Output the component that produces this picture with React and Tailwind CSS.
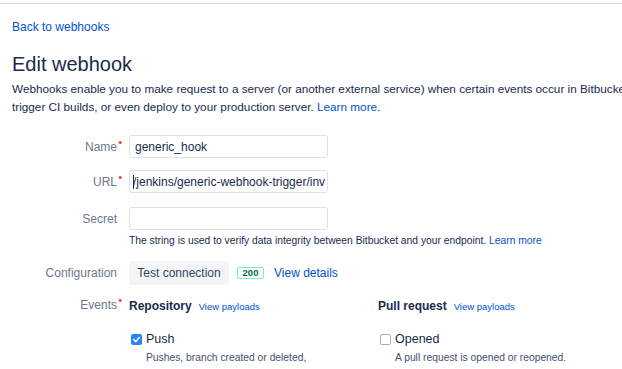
import React from "react";

const font = { fontFamily: '"Liberation Sans", Arial, sans-serif' };

function Req() {
  return <span className="absolute -right-[5px] top-[-2px] text-[10px] leading-none text-[#de350b]">•</span>;
}

function Label({ children, req, className = "" }) {
  return (
    <div className={"w-[105px] shrink-0 text-right text-[12px] text-[#6b778c] " + className}>
      <span className="relative">
        {children}
        {req && <Req />}
      </span>
    </div>
  );
}

function Check({ checked }) {
  return checked ? (
    <span className="flex h-[11px] w-[11px] items-center justify-center rounded-[2px] bg-[#2684ff]">
      <svg width="9" height="9" viewBox="0 0 10 10">
        <path d="M2 5.2 L4.2 7.4 L8 2.8" fill="none" stroke="white" strokeWidth="1.8" strokeLinecap="round" strokeLinejoin="round" />
      </svg>
    </span>
  ) : (
    <span className="block h-[11px] w-[11px] rounded-[2px] border border-[#a5adba] bg-white" />
  );
}

export default function App() {
  return (
    <div className="h-[369px] w-[622px] overflow-hidden bg-white text-[#172b4d]" style={font}>
      <div className="mt-[3px] h-px bg-[#dcdcdc]" />
      <div className="pl-[12px]">
        <div className="mt-[15px] text-[12px] leading-[16px] text-[#0052cc]">Back to webhooks</div>
        <h1 className="mt-[17px] text-[20px] leading-[24px] text-[#172b4d]">Edit webhook</h1>
        <p className="mt-[4px] whitespace-nowrap text-[11.75px] leading-[18px] text-[#172b4d]">
          Webhooks enable you to make request to a server (or another external service) when certain events occur in Bitbucket to
          <br />
          trigger CI builds, or even deploy to your production server. <span className="text-[#0052cc]">Learn more</span>.
        </p>

        <div className="mt-[19px] flex items-center gap-[12px]">
          <Label req>Name</Label>
          <div className="flex h-[23px] w-[199px] items-center rounded-[3px] border border-[#dfe1e6] pl-[5px] text-[12px]">
            generic_hook
          </div>
        </div>
        <div className="mt-[12px] flex items-center gap-[12px]">
          <Label req>URL</Label>
          <div className="flex h-[23px] w-[199px] items-center overflow-hidden whitespace-nowrap rounded-[3px] border border-[#dfe1e6] pl-[3px] pr-[2px] text-[12px]">
            <span className="mr-[-1px] inline-block h-[14px] w-px shrink-0 bg-[#172b4d]" />
            <span className="overflow-hidden">/jenkins/generic-webhook-trigger/invoke</span>
          </div>
        </div>
        <div className="mt-[14px] flex items-center gap-[12px]">
          <Label>Secret</Label>
          <div className="h-[23px] w-[199px] rounded-[3px] border border-[#dfe1e6]" />
        </div>
        <div className="mt-[4px] flex gap-[12px]">
          <div className="w-[105px] shrink-0" />
          <div className="whitespace-nowrap text-[10.3px] leading-[14px] text-[#172b4d]">
            The string is used to verify data integrity between Bitbucket and your endpoint.{" "}
            <span className="text-[#0052cc]">Learn more</span>
          </div>
        </div>

        <div className="mt-[13px] flex items-center gap-[12px]">
          <Label>Configuration</Label>
          <div className="flex items-center">
            <div className="flex h-[24px] w-[100px] items-center justify-center rounded-[3px] bg-[#f4f5f7] text-[12px] text-[#344563]">
              Test connection
            </div>
            <div className="ml-[8px] flex h-[12px] w-[27px] items-center justify-center rounded-[2px] border border-[#79f2c0] text-[9.5px] font-bold leading-none text-[#006644]">
              200
            </div>
            <div className="ml-[10px] text-[12px] text-[#0052cc]">View details</div>
          </div>
        </div>

        <div className="mt-[12px] flex gap-[12px]">
          <Label req className="leading-[16px]">Events</Label>
          <div className="flex">
            <div className="w-[249px]">
              <div className="flex items-baseline leading-[18px]">
                <span className="text-[12px] font-bold text-[#172b4d]">Repository</span>
                <span className="ml-[7px] text-[9.5px] text-[#0052cc]">View payloads</span>
              </div>
              <div className="mt-[14px] flex items-center gap-[4px] text-[12.5px] leading-[18px]">
                <span className="ml-[2px]"><Check checked /></span>
                <span>Push</span>
              </div>
              <div className="mt-[3px] pl-[17px] text-[10.3px] leading-[14px] text-[#42526e]">
                Pushes, branch created or deleted,
              </div>
            </div>
            <div className="w-[249px]">
              <div className="flex items-baseline leading-[18px]">
                <span className="text-[12px] font-bold text-[#172b4d]">Pull request</span>
                <span className="ml-[7px] text-[9.5px] text-[#0052cc]">View payloads</span>
              </div>
              <div className="mt-[14px] flex items-center gap-[4px] text-[12.5px] leading-[18px]">
                <span className="ml-[2px]"><Check /></span>
                <span>Opened</span>
              </div>
              <div className="mt-[3px] pl-[17px] text-[10.3px] leading-[14px] text-[#42526e]">
                A pull request is opened or reopened.
              </div>
            </div>
          </div>
        </div>
      </div>
    </div>
  );
}
